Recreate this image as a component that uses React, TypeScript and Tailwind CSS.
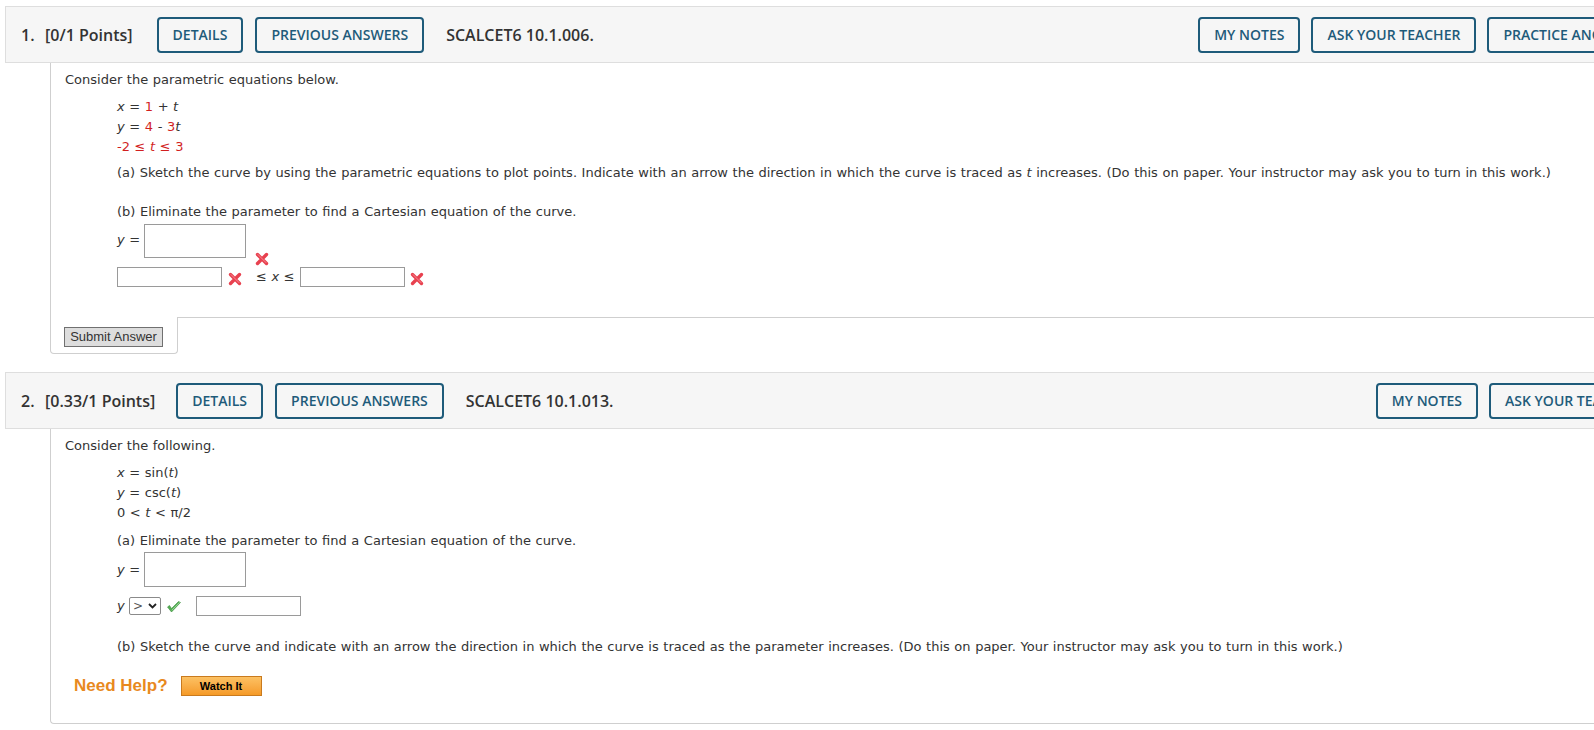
import React from "react";

const body =
  "font-['DejaVu_Sans',Verdana,sans-serif] text-[13px] leading-5 text-[#333] [word-spacing:0.45px]";

const HeaderButton: React.FC<{ children: React.ReactNode }> = ({ children }) => (
  <span className="inline-flex h-[36px] shrink-0 items-center whitespace-nowrap rounded-[4px] border-2 border-[#1e5b7a] px-[14px] text-[14px] font-semibold text-[#1e5b7a]">
    {children}
  </span>
);

const QuestionHeader: React.FC<{
  num: string;
  points: string;
  code: string;
  extra?: boolean;
  gap: string;
}> = ({ num, points, code, extra, gap }) => (
  <div className="box-border flex h-[57px] items-center border border-[#dedede] bg-[#f6f6f6] pl-[15px] pr-[12px] font-['Open_Sans',sans-serif] text-[#333]">
    <span className="w-[24px] text-[16px] font-semibold">{num}</span>
    <span className="text-[16px] font-semibold">{points}</span>
    <div className={`flex items-center gap-[12px] ${gap}`}>
      <HeaderButton>DETAILS</HeaderButton>
      <HeaderButton>PREVIOUS ANSWERS</HeaderButton>
    </div>
    <span className="ml-[22px] text-[16px] font-semibold">{code}</span>
    <div className="ml-auto flex items-center gap-[11px]">
      <HeaderButton>MY NOTES</HeaderButton>
      <HeaderButton>ASK YOUR TEACHER</HeaderButton>
      {extra && <HeaderButton>PRACTICE ANOTHER</HeaderButton>}
    </div>
  </div>
);

const XMark = () => (
  <svg width="14" height="14" viewBox="0 0 14 14" className="shrink-0">
    <path d="M2.5 2.5 L11.5 11.5 M11.5 2.5 L2.5 11.5" stroke="#e8414f" strokeWidth="3.4" strokeLinecap="round" />
    <path d="M3 2.6 L11 10.6" stroke="#f58a94" strokeWidth="1" strokeLinecap="round" />
  </svg>
);

const CheckMark = () => (
  <svg width="16" height="14" viewBox="0 0 16 14" className="shrink-0">
    <path d="M1.5 7 L5.5 12 L14.5 2.5 L12.5 1.5 L5.5 8.5 L3.5 5.5 Z" fill="#54ad54" stroke="#3d8f3d" strokeWidth="0.6" strokeLinejoin="round" />
    <path d="M6 10 L13.5 2.6" stroke="#9ad89a" strokeWidth="0.9" fill="none" strokeLinecap="round" />
  </svg>
);

const Red: React.FC<{ children: React.ReactNode }> = ({ children }) => (
  <span className="text-[#d21f1f]">{children}</span>
);

const App: React.FC = () => {
  return (
    <div className="h-[730px] w-[1594px] overflow-hidden bg-white">
      <div className="ml-[5px] w-[1662px] pt-[6px]">
        {/* question 1 */}
        <QuestionHeader num="1." points="[0/1 Points]" code="SCALCET6 10.1.006." extra gap="ml-[24px]" />
        <div className={`ml-[45px] ${body}`}>
          <div className="border-l border-[#cfcfcf] pb-[30px] pl-[14px] pt-[7px]">
            <p>Consider the parametric equations below.</p>
            <div className="ml-[52px] mt-[7px]">
              <p>
                <i>x</i> = <Red>1</Red> + <i>t</i>
              </p>
              <p>
                <i>y</i> = <Red>4</Red> - <Red>3</Red><i>t</i>
              </p>
              <p>
                <Red>
                  -2 ≤ <i>t</i> ≤ 3
                </Red>
              </p>
              <p className="mt-[6px] whitespace-nowrap">
                (a) Sketch the curve by using the parametric equations to plot points. Indicate with an arrow the direction in which the curve is traced as <i>t</i> increases. (Do this on paper. Your instructor may ask you to turn in this work.)
              </p>
              <p className="mt-[19px]">(b) Eliminate the parameter to find a Cartesian equation of the curve.</p>
              <div className="mt-[2px] flex items-start">
                <span className="mt-[6px] w-[27px]">
                  <i>y</i> =
                </span>
                <div className="h-[34px] w-[102px] border border-[#9a9a9a] bg-white" />
                <div className="ml-[9px] mt-[28px]">
                  <XMark />
                </div>
              </div>
              <div className="mt-[1px] flex items-center">
                <div className="h-[20px] w-[105px] border border-[#9a9a9a] bg-white" />
                <div className="ml-[6px] mt-[4px]">
                  <XMark />
                </div>
                <span className="ml-[14px]">
                  ≤ <i>x</i> ≤
                </span>
                <div className="ml-[5px] h-[20px] w-[105px] border border-[#9a9a9a] bg-white" />
                <div className="ml-[5px] mt-[4px]">
                  <XMark />
                </div>
              </div>
            </div>
          </div>
          <div className="flex">
            <div className="box-border h-[37px] w-[128px] rounded-b-[4px] border-b border-l border-r border-[#cfcfcf] pl-[13px] pt-[10px]">
              <span className="inline-flex h-[20px] w-[99px] items-center justify-center border border-[#707070] bg-[#dddddd] font-['Liberation_Sans',Arial,sans-serif] text-[13px] text-[#333] [word-spacing:0px]">
                Submit Answer
              </span>
            </div>
            <div className="flex-1 border-t border-[#cfcfcf]" />
          </div>
        </div>

        {/* question 2 */}
        <div className="mt-[18px]">
          <QuestionHeader num="2." points="[0.33/1 Points]" code="SCALCET6 10.1.013." gap="ml-[21px]" />
        </div>
        <div className={`ml-[45px] rounded-bl-[4px] border-b border-l border-[#cfcfcf] pb-[26px] pl-[14px] pt-[7px] ${body}`}>
          <p>Consider the following.</p>
          <div className="ml-[52px] mt-[7px]">
            <p>
              <i>x</i> = sin(<i>t</i>)
            </p>
            <p>
              <i>y</i> = csc(<i>t</i>)
            </p>
            <p>
              0 &lt; <i>t</i> &lt; π/2
            </p>
            <p className="mt-[8px]">(a) Eliminate the parameter to find a Cartesian equation of the curve.</p>
            <div className="mt-[1px] flex items-center">
              <span className="w-[27px]">
                <i>y</i> =
              </span>
              <div className="h-[35px] w-[102px] border border-[#9a9a9a] bg-white" />
            </div>
            <div className="mt-[9px] flex items-center">
              <span className="w-[12px]">
                <i>y</i>
              </span>
              <span className="flex h-[18px] w-[32px] items-center justify-between rounded-[2px] border border-[#8a8a8a] bg-white pl-[3px] pr-[3px] text-[12px] text-[#555]">
                &gt;
                <svg width="9" height="6" viewBox="0 0 9 6">
                  <path d="M1 1 L4.5 4.5 L8 1" stroke="#222" strokeWidth="1.8" fill="none" />
                </svg>
              </span>
              <div className="ml-[5px] mt-[2px]">
                <CheckMark />
              </div>
              <div className="ml-[14px] h-[20px] w-[105px] border border-[#9a9a9a] bg-white" />
            </div>
            <p className="mt-[21px]">
              (b) Sketch the curve and indicate with an arrow the direction in which the curve is traced as the parameter increases. (Do this on paper. Your instructor may ask you to turn in this work.)
            </p>
          </div>
          <div className="ml-[9px] mt-[18px] flex h-[22px] items-center [word-spacing:0px]">
            <span className="font-['Liberation_Sans',Arial,sans-serif] text-[17px] font-bold text-[#e8891e]">Need Help?</span>
            <span className="ml-[13px] inline-flex h-[20px] w-[81px] items-center justify-center border border-[#c97a1e] bg-gradient-to-b from-[#fcc162] to-[#f59a25] font-['Liberation_Sans',Arial,sans-serif] text-[11px] font-bold text-black">
              Watch It
            </span>
          </div>
        </div>
      </div>
    </div>
  );
};

export default App;
